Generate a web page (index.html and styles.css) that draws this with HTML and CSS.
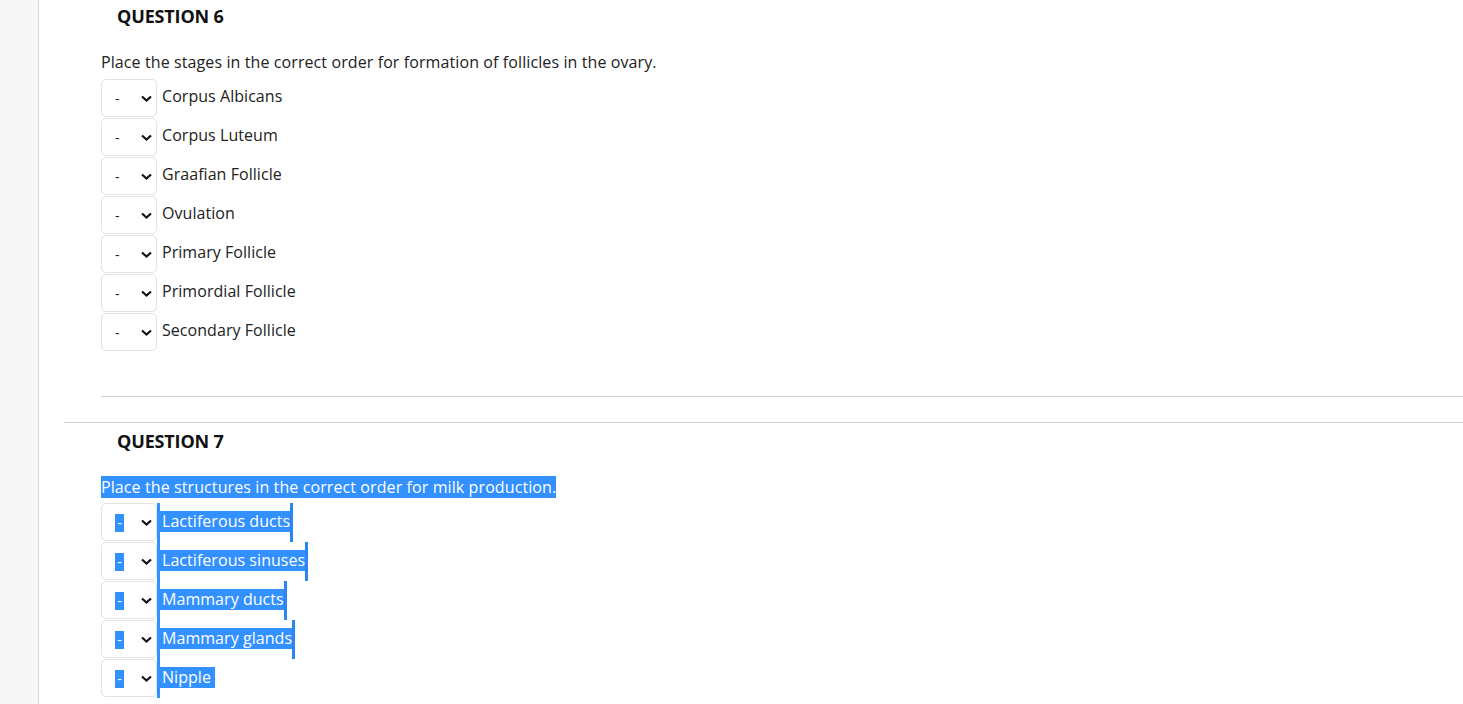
FILE: index.html
```html
<!DOCTYPE html>
<html>
<head>
<meta charset="utf-8">
<link rel="stylesheet" href="styles.css">
</head>
<body>
<div class="page">
  <aside class="side"></aside>
  <main class="main">
    <section class="question q6">
      <h2 class="q-title">QUESTION 6</h2>
      <p class="q-text">Place the stages in the correct order for formation of follicles in the ovary.</p>
      <div class="answers">
        <div class="row"><div class="sel"><span class="dash">-</span><svg class="chev" width="11" height="7" viewBox="0 0 11 7"><polyline points="1,1.5 5.5,5.5 10,1.5" fill="none" stroke="#111" stroke-width="2.2"/></svg></div><span class="label">Corpus Albicans</span></div>
        <div class="row"><div class="sel"><span class="dash">-</span><svg class="chev" width="11" height="7" viewBox="0 0 11 7"><polyline points="1,1.5 5.5,5.5 10,1.5" fill="none" stroke="#111" stroke-width="2.2"/></svg></div><span class="label">Corpus Luteum</span></div>
        <div class="row"><div class="sel"><span class="dash">-</span><svg class="chev" width="11" height="7" viewBox="0 0 11 7"><polyline points="1,1.5 5.5,5.5 10,1.5" fill="none" stroke="#111" stroke-width="2.2"/></svg></div><span class="label">Graafian Follicle</span></div>
        <div class="row"><div class="sel"><span class="dash">-</span><svg class="chev" width="11" height="7" viewBox="0 0 11 7"><polyline points="1,1.5 5.5,5.5 10,1.5" fill="none" stroke="#111" stroke-width="2.2"/></svg></div><span class="label">Ovulation</span></div>
        <div class="row"><div class="sel"><span class="dash">-</span><svg class="chev" width="11" height="7" viewBox="0 0 11 7"><polyline points="1,1.5 5.5,5.5 10,1.5" fill="none" stroke="#111" stroke-width="2.2"/></svg></div><span class="label">Primary Follicle</span></div>
        <div class="row"><div class="sel"><span class="dash">-</span><svg class="chev" width="11" height="7" viewBox="0 0 11 7"><polyline points="1,1.5 5.5,5.5 10,1.5" fill="none" stroke="#111" stroke-width="2.2"/></svg></div><span class="label">Primordial Follicle</span></div>
        <div class="row"><div class="sel"><span class="dash">-</span><svg class="chev" width="11" height="7" viewBox="0 0 11 7"><polyline points="1,1.5 5.5,5.5 10,1.5" fill="none" stroke="#111" stroke-width="2.2"/></svg></div><span class="label">Secondary Follicle</span></div>
      </div>
      <hr class="rule-inner">
    </section>
    <hr class="rule-outer">
    <section class="question q7">
      <h2 class="q-title">QUESTION 7</h2>
      <p class="q-text"><span class="hl">Place the structures in the correct order for milk production.</span></p>
      <div class="answers selected">
        <div class="row"><div class="sel"><span class="dash hl-box">-</span><svg class="chev" width="11" height="7" viewBox="0 0 11 7"><polyline points="1,1.5 5.5,5.5 10,1.5" fill="none" stroke="#111" stroke-width="2.2"/></svg></div><span class="label-wrap end"><span class="label hl">Lactiferous ducts</span></span></div>
        <div class="row"><div class="sel"><span class="dash hl-box">-</span><svg class="chev" width="11" height="7" viewBox="0 0 11 7"><polyline points="1,1.5 5.5,5.5 10,1.5" fill="none" stroke="#111" stroke-width="2.2"/></svg></div><span class="label-wrap end"><span class="label hl">Lactiferous sinuses</span></span></div>
        <div class="row"><div class="sel"><span class="dash hl-box">-</span><svg class="chev" width="11" height="7" viewBox="0 0 11 7"><polyline points="1,1.5 5.5,5.5 10,1.5" fill="none" stroke="#111" stroke-width="2.2"/></svg></div><span class="label-wrap end"><span class="label hl">Mammary ducts</span></span></div>
        <div class="row"><div class="sel"><span class="dash hl-box">-</span><svg class="chev" width="11" height="7" viewBox="0 0 11 7"><polyline points="1,1.5 5.5,5.5 10,1.5" fill="none" stroke="#111" stroke-width="2.2"/></svg></div><span class="label-wrap end"><span class="label hl">Mammary glands</span></span></div>
        <div class="row"><div class="sel"><span class="dash hl-box">-</span><svg class="chev" width="11" height="7" viewBox="0 0 11 7"><polyline points="1,1.5 5.5,5.5 10,1.5" fill="none" stroke="#111" stroke-width="2.2"/></svg></div><span class="label-wrap"><span class="label hl">Nipple&nbsp;</span></span></div>
      </div>
    </section>
  </main>
</div>
</body>
</html>
```
FILE: styles.css
```css
html, body {
  margin: 0;
  padding: 0;
  background: #fff;
}
body {
  font-family: "Open Sans", "Liberation Sans", sans-serif;
  color: #222;
}
.page {
  display: flex;
  height: 704px;
  overflow: hidden;
}
.side {
  width: 38px;
  flex: 0 0 38px;
  background: #f7f7f7;
  border-right: 1px solid #d6d6d6;
}
.main {
  flex: 1;
  min-width: 0;
}
.question {
  padding-left: 62px;
}
.q-title {
  margin: 0 0 0 16px;
  font-size: 18px;
  font-weight: 700;
  line-height: 24px;
  color: #111;
  letter-spacing: -0.15px;
}
.q6 .q-title {
  padding-top: 4px;
}
.q-text {
  margin: 23px 0 0 0;
  font-size: 16px;
  line-height: 22px;
  color: #222;
  letter-spacing: 0.1px;
}
.answers {
  margin-top: 6px;
  display: flex;
  flex-direction: column;
}
.row {
  display: flex;
  align-items: flex-start;
  height: 39px;
}
.sel {
  box-sizing: border-box;
  width: 56px;
  height: 38px;
  border: 1px solid #e2e2e2;
  border-radius: 5px;
  display: flex;
  align-items: center;
  padding: 2px 0 0 13px;
  background: #fff;
}
.dash {
  font-size: 14px;
  line-height: 18px;
  width: 10px;
  color: #222;
}
.chev {
  margin-left: 16px;
  margin-top: -2px;
}
.label {
  margin-left: 5px;
  font-size: 16px;
  line-height: 20px;
  padding-top: 7px;
  align-self: flex-start;
  letter-spacing: 0.05px;
}
.rule-inner {
  margin: 44px 0 0 0;
  border: 0;
  border-top: 1px solid #d0d0d0;
  height: 0;
}
.rule-outer {
  margin: 25px 0 0 25px;
  border: 0;
  border-top: 1px solid #d0d0d0;
  height: 0;
}
.q7 .q-title {
  margin-top: 6px;
}
.q7 .q-text {
  margin-top: 23px;
}
.q7 .answers {
  margin-top: 5px;
}
.hl {
  background: #3390ff;
  color: #fff;
}
.hl-box {
  background: #3390ff;
  color: #fff;
  width: 9px;
  height: 18px;
  display: inline-flex;
  align-items: center;
  justify-content: center;
  line-height: 18px;
  margin-right: 1px;
}
.label-wrap {
  display: flex;
  align-items: flex-start;
  height: 39px;
  border-left: 3px solid #3390ff;
}
.label-wrap.end {
  border-right: 3px solid #2a86f5;
}
.label-wrap .label {
  margin-left: 0;
  padding: 0 0 0 2px;
  margin-top: 8px;
  line-height: 21px;
}
```
